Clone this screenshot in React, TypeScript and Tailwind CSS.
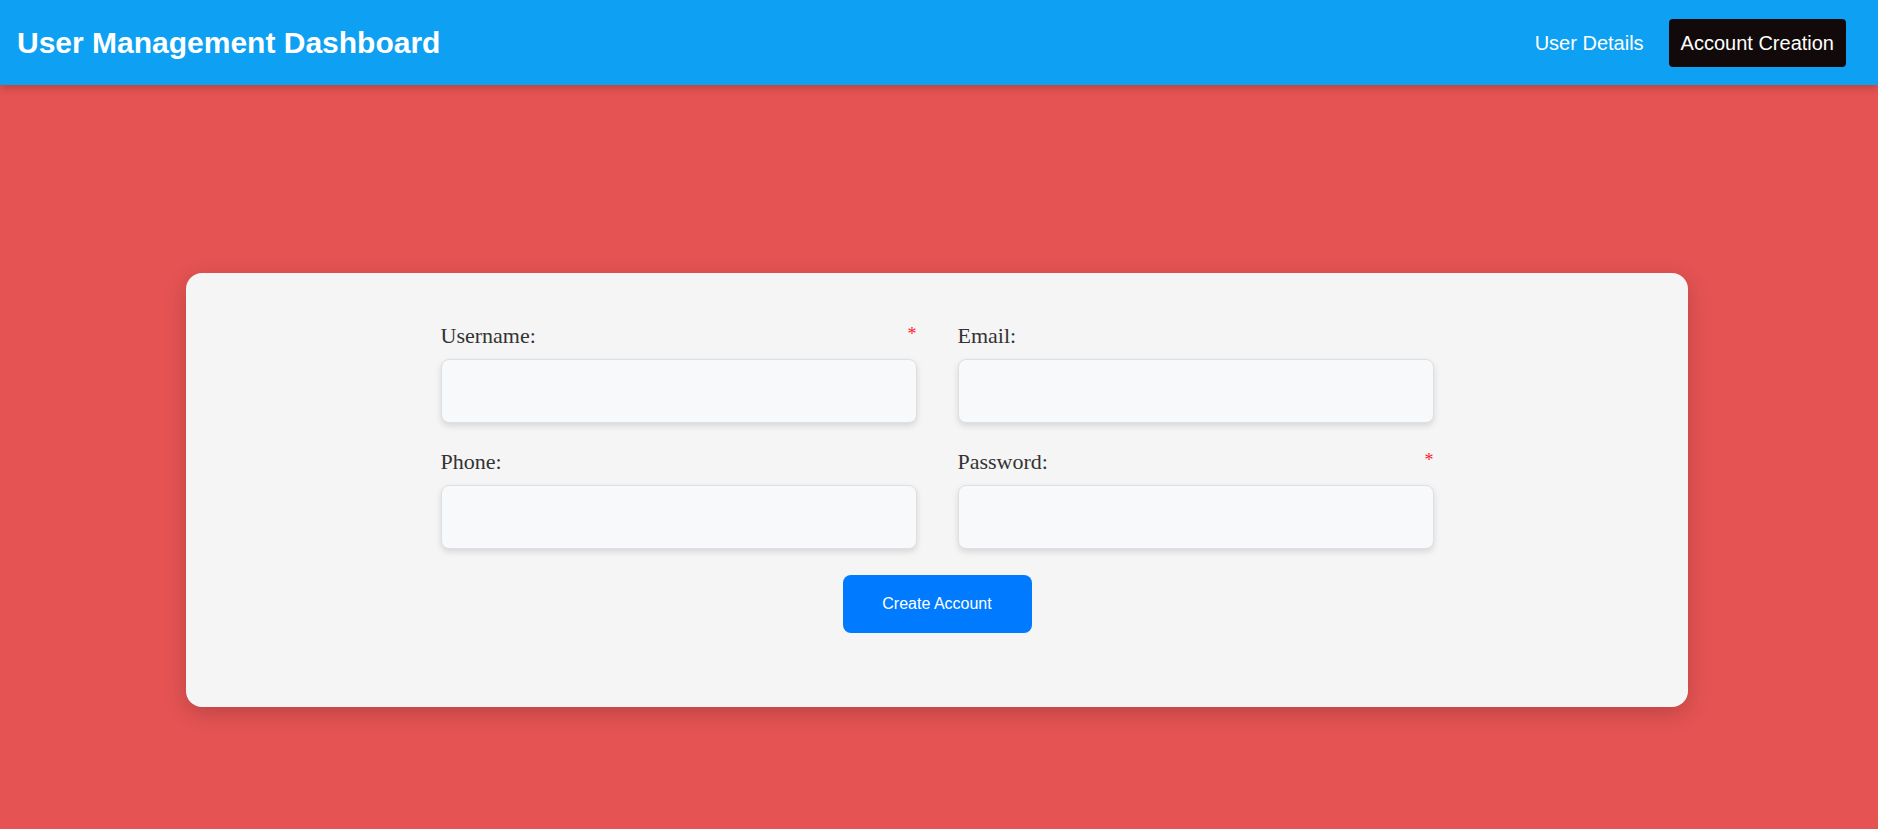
import { useState } from "react"

interface Field {
  name: string
  label: string
  type: string
  required: boolean
}

const fields: Field[] = [
  { name: "username", label: "Username:", type: "text", required: true },
  { name: "email", label: "Email:", type: "email", required: false },
  { name: "phone", label: "Phone:", type: "tel", required: false },
  { name: "password", label: "Password:", type: "password", required: true },
]

export default function App() {
  const [form, setForm] = useState<Record<string, string>>({
    username: "",
    email: "",
    phone: "",
    password: "",
  })

  return (
    <div className="min-h-screen bg-[#e55353] font-['Liberation_Serif',serif]">
      <header className="h-[85px] bg-[#0ea1f3] shadow-[0_3px_8px_rgba(0,0,0,0.2)] flex items-center justify-between pl-[17px] pr-[32px] font-['Liberation_Sans',Arial,sans-serif]">
        <h1 className="text-[30px] font-bold text-white">User Management Dashboard</h1>
        <nav className="flex items-center gap-[13px]">
          <button className="px-[12px] h-[48px] text-[20px] text-white">User Details</button>
          <button className="px-[12px] h-[48px] text-[20px] text-white bg-[#120a0a] rounded-[4px]">
            Account Creation
          </button>
        </nav>
      </header>

      {/* form card */}
      <main className="pt-[188px] pb-[90px] pr-[4px]">
        <div className="w-[1502px] mx-auto rounded-2xl bg-[#f5f5f5] shadow-[0_6px_22px_rgba(0,0,0,0.18)] pt-[50px] pb-[74px]">
          <form className="w-[993px] mx-auto" onSubmit={(e) => e.preventDefault()}>
            <div className="grid grid-cols-2 gap-x-[41px] gap-y-[26px]">
              {fields.map((f) => (
                <div key={f.name}>
                  <div className="flex items-start justify-between h-[25px] mb-[11px]">
                    <label className="text-[22px] leading-[25px] text-[#333]">{f.label}</label>
                    {f.required && (
                      <span className="text-[18px] leading-[23px] text-[#ff1a2e]">*</span>
                    )}
                  </div>
                  <input
                    type={f.type}
                    value={form[f.name]}
                    onChange={(e) => setForm((s) => ({ ...s, [f.name]: e.target.value }))}
                    className="block w-full h-[64px] px-3 rounded-lg border border-[#dcdfe3] bg-[#f8f9fa] shadow-[0_3px_6px_rgba(0,0,0,0.12)] outline-none text-[18px]"
                  />
                </div>
              ))}
            </div>
            <button
              type="submit"
              className="block mx-auto mt-[26px] w-[189px] h-[58px] rounded-lg bg-[#007bff] text-white text-[16px] font-['Liberation_Sans',Arial,sans-serif]"
            >
              Create Account
            </button>
          </form>
        </div>
      </main>
    </div>
  )
}
